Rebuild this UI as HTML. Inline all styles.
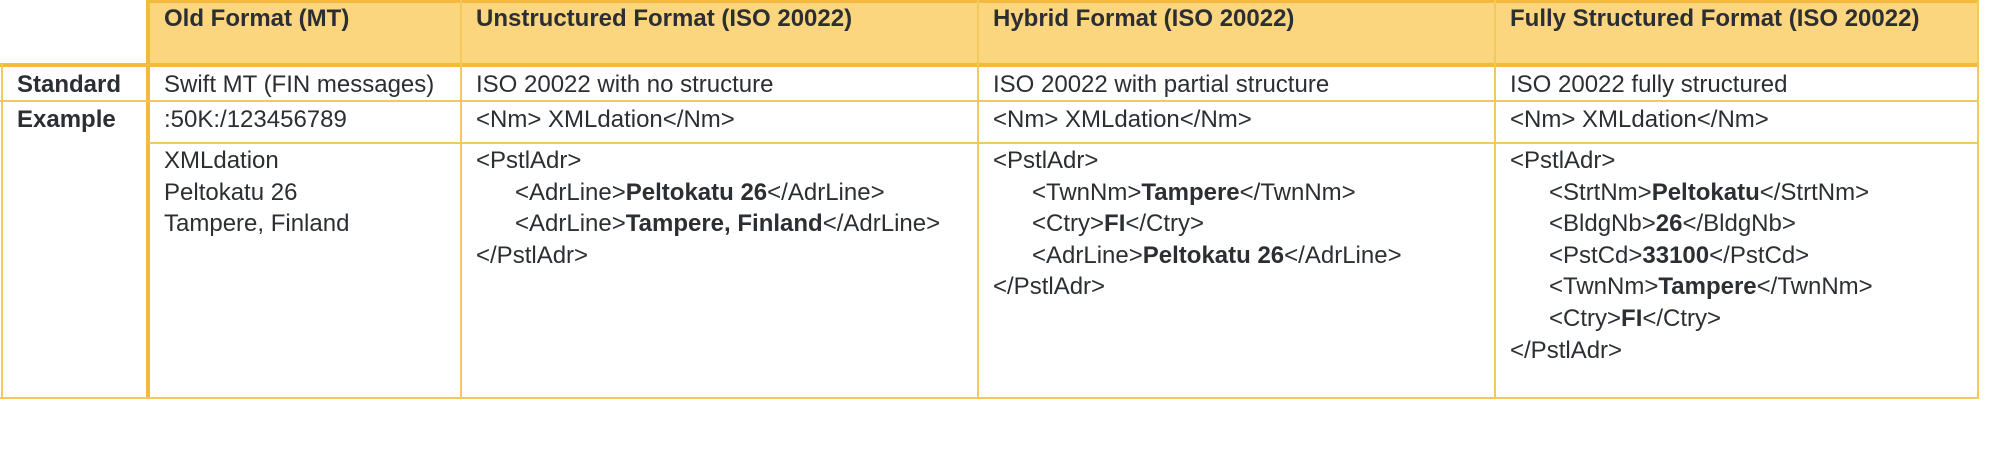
<!DOCTYPE html>
<html><head><meta charset="utf-8"><style>
body{margin:0;width:2008px;height:459px;background:#fff;position:relative;overflow:hidden;font-family:"Liberation Sans",sans-serif;color:#2b2f33;font-size:24px}
.a{position:absolute}
.hl{position:absolute;height:2px;background:#f4c85c}
.vl{position:absolute;width:2px;background:#f4c85c}
.t{position:absolute;white-space:nowrap;line-height:31.6px}
.i{padding-left:39px}
b{font-weight:bold}
</style></head><body>
<div class="a" style="left:149px;top:0;width:1830px;height:64px;background:#fcd57f"></div>
<div class="a" style="left:149px;top:0;width:1830px;height:3px;background:#f4b93f"></div>
<div class="a" style="left:0;top:63px;width:1979px;height:4px;background:#f4b93f"></div>
<div class="a" style="left:146px;top:0;width:4px;height:399px;background:#f4b93f"></div>
<div class="vl" style="left:1977px;top:0;height:399px"></div>
<div class="vl" style="left:1px;top:64px;height:335px"></div>
<div class="vl" style="left:460px;top:0;height:399px;background:#f4c85c"></div>
<div class="vl" style="left:977px;top:0;height:399px"></div>
<div class="vl" style="left:1494px;top:0;height:399px"></div>
<div class="hl" style="left:0;top:100px;width:1979px"></div>
<div class="hl" style="left:149px;top:142px;width:1830px"></div>
<div class="hl" style="left:0;top:397px;width:1979px"></div>

<div class="t" style="left:164px;top:3px;font-weight:bold">Old Format (MT)</div>
<div class="t" style="left:476px;top:3px;font-weight:bold">Unstructured Format (ISO 20022)</div>
<div class="t" style="left:993px;top:3px;font-weight:bold">Hybrid Format (ISO 20022)</div>
<div class="t" style="left:1510px;top:3px;font-weight:bold">Fully Structured Format (ISO 20022)</div>

<div class="t" style="left:17px;top:69px;font-weight:bold">Standard</div>
<div class="t" style="left:17px;top:104px;font-weight:bold">Example</div>

<div class="t" style="left:164px;top:69px">Swift MT (FIN messages)</div>
<div class="t" style="left:476px;top:69px">ISO 20022 with no structure</div>
<div class="t" style="left:993px;top:69px">ISO 20022 with partial structure</div>
<div class="t" style="left:1510px;top:69px">ISO 20022 fully structured</div>

<div class="t" style="left:164px;top:104px">:50K:/123456789</div>
<div class="t" style="left:476px;top:104px">&lt;Nm&gt; XMLdation&lt;/Nm&gt;</div>
<div class="t" style="left:993px;top:104px">&lt;Nm&gt; XMLdation&lt;/Nm&gt;</div>
<div class="t" style="left:1510px;top:104px">&lt;Nm&gt; XMLdation&lt;/Nm&gt;</div>

<div class="t" style="left:164px;top:145px">XMLdation<br>Peltokatu 26<br>Tampere, Finland</div>
<div class="t" style="left:476px;top:145px">&lt;PstlAdr&gt;<div class="i">&lt;AdrLine&gt;<b>Peltokatu 26</b>&lt;/AdrLine&gt;</div><div class="i">&lt;AdrLine&gt;<b>Tampere, Finland</b>&lt;/AdrLine&gt;</div>&lt;/PstlAdr&gt;</div>
<div class="t" style="left:993px;top:145px">&lt;PstlAdr&gt;<div class="i">&lt;TwnNm&gt;<b>Tampere</b>&lt;/TwnNm&gt;</div><div class="i">&lt;Ctry&gt;<b>FI</b>&lt;/Ctry&gt;</div><div class="i">&lt;AdrLine&gt;<b>Peltokatu 26</b>&lt;/AdrLine&gt;</div>&lt;/PstlAdr&gt;</div>
<div class="t" style="left:1510px;top:145px">&lt;PstlAdr&gt;<div class="i">&lt;StrtNm&gt;<b>Peltokatu</b>&lt;/StrtNm&gt;</div><div class="i">&lt;BldgNb&gt;<b>26</b>&lt;/BldgNb&gt;</div><div class="i">&lt;PstCd&gt;<b>33100</b>&lt;/PstCd&gt;</div><div class="i">&lt;TwnNm&gt;<b>Tampere</b>&lt;/TwnNm&gt;</div><div class="i">&lt;Ctry&gt;<b>FI</b>&lt;/Ctry&gt;</div>&lt;/PstlAdr&gt;</div>
</body></html>
